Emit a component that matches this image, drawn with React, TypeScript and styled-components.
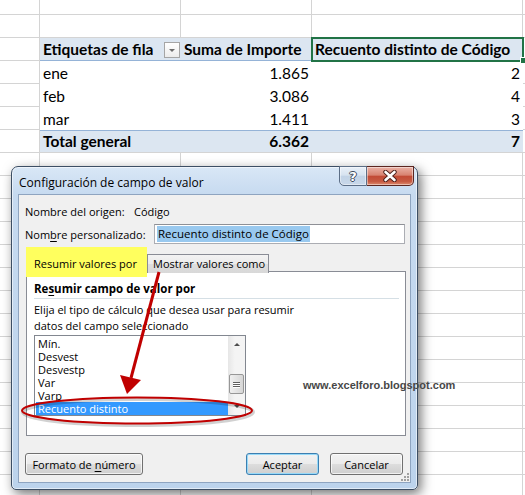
import React from 'react';
import styled, { createGlobalStyle, css } from 'styled-components';

const GlobalStyle = createGlobalStyle`
  html, body {
    margin: 0;
    padding: 0;
    background: #ffffff;
    overflow: hidden;
  }
`;

const Page = styled.div`
  position: relative;
  width: 525px;
  height: 495px;
  overflow: hidden;
  background: #ffffff;
`;

/* ---------- spreadsheet ---------- */

const Sheet = styled.div`
  width: 525px;
  font-family: Lato, "Liberation Sans", sans-serif;
  font-size: 15.5px;
  color: #000;
`;

const SheetRow = styled.div<{ $h?: number }>`
  display: grid;
  grid-template-columns: 40px 141px 131px 211px 1fr;
  height: ${p => p.$h ?? 23}px;
`;

type CellKind = 'grid' | 'head' | 'data' | 'total';

const Cell = styled.div<{ $kind?: CellKind; $right?: boolean; $selected?: boolean }>`
  position: relative;
  box-sizing: border-box;
  display: flex;
  align-items: flex-end;
  justify-content: ${p => (p.$right ? 'flex-end' : 'space-between')};
  padding: 0 3px 1px 3px;
  line-height: 19px;
  white-space: nowrap;
  ${p => {
    switch (p.$kind) {
      case 'head':
        return css`
          background: #dce6f1;
          border-bottom: 1px solid #95b3d7;
          font-weight: 700;
        `;
      case 'data':
        return css`
          background: #ffffff;
        `;
      case 'total':
        return css`
          background: #dce6f1;
          box-shadow: inset 0 1px 0 #95b3d7;
          border-bottom: 1px solid #d4d4d4;
          font-weight: 700;
        `;
      default:
        return css`
          border-right: 1px solid #d4d4d4;
          border-bottom: 1px solid #d4d4d4;
        `;
    }
  }}
  ${p =>
    p.$selected &&
    css`
      outline: 2px solid #217346;
      outline-offset: -1px;
      z-index: 2;
      &::after {
        content: '';
        position: absolute;
        right: -4px;
        bottom: -4px;
        width: 5px;
        height: 5px;
        background: #217346;
        border: 1px solid #fff;
      }
    `}
`;

const FilterButton = styled.span`
  box-sizing: border-box;
  width: 16px;
  height: 16px;
  margin: 0 -2px 1px 0;
  border: 1px solid #a5a5a5;
  background: linear-gradient(#ffffff, #ececec);
  display: flex;
  align-items: center;
  justify-content: center;
  &::before {
    content: '';
    border-left: 3px solid transparent;
    border-right: 3px solid transparent;
    border-top: 3px solid #6d6d6d;
  }
`;

/* ---------- dialog ---------- */

const Dialog = styled.div`
  position: absolute;
  left: 11px;
  top: 166px;
  width: 407px;
  height: 324px;
  box-sizing: border-box;
  border: 1px solid #3c4e64;
  border-radius: 7px 7px 5px 5px;
  background: linear-gradient(#d9e7f6, #c6daf0 28px, #bcd3ec);
  box-shadow: 3px 4px 12px rgba(0, 0, 0, 0.55), inset 0 0 0 1px rgba(255, 255, 255, 0.55);
  display: flex;
  flex-direction: column;
  padding: 0 6px 6px;
  font-family: "Open Sans", "Liberation Sans", sans-serif;
  font-size: 11px;
  color: #000;
  z-index: 3;
`;

const TitleBar = styled.div`
  height: 27px;
  display: flex;
  justify-content: space-between;
  align-items: flex-start;
`;

const TitleText = styled.div`
  padding: 8px 0 0 1px;
  line-height: 15px;
  font-size: 12px;
  color: #000;
`;

const CaptionButtons = styled.div`
  display: flex;
  margin: -1px -3px 0 0;
`;

const CaptionButton = styled.div<{ $close?: boolean }>`
  box-sizing: border-box;
  height: 20px;
  width: ${p => (p.$close ? 47 : 28)}px;
  display: flex;
  align-items: center;
  justify-content: center;
  border: 1px solid ${p => (p.$close ? '#5b2620' : '#5c6e86')};
  border-left-width: ${p => (p.$close ? 0 : 1)}px;
  border-radius: ${p => (p.$close ? '0 0 5px 0' : '0 0 0 5px')};
  background: ${p =>
    p.$close
      ? 'linear-gradient(#eab2a6, #d88371 45%, #c24b36 52%, #c65a42 80%, #dd8c6e)'
      : 'linear-gradient(#e9f0f8, #d7e3f0 45%, #c2d3e6 52%, #c8d8ea)'};
  box-shadow: inset 0 0 0 1px rgba(255, 255, 255, 0.45);
`;

const HelpGlyph = styled.span`
  font-family: "DejaVu Sans", sans-serif;
  font-weight: 700;
  font-size: 13px;
  line-height: 13px;
  color: #fff;
  text-shadow: -1px 0 #3e4b5c, 1px 0 #3e4b5c, 0 -1px #3e4b5c, 0 1px #3e4b5c;
`;

const ClientArea = styled.div`
  position: relative;
  flex: 1;
  border: 1px solid #8ea4c0;
  background: #f0f0f0;
  display: flex;
  flex-direction: column;
  padding: 8px 5px 7px 6px;
`;

const FieldRow = styled.div<{ $label: number; $h: number; $gap?: number }>`
  display: grid;
  grid-template-columns: ${p => p.$label}px 1fr;
  align-items: center;
  height: ${p => p.$h}px;
  margin-top: ${p => p.$gap ?? 0}px;
`;

const Accel = styled.span`
  text-decoration: underline;
  text-underline-offset: 2px;
`;

const TextBox = styled.div`
  box-sizing: border-box;
  height: 20px;
  border: 1px solid #abadb3;
  border-top-color: #8e9096;
  background: #fff;
  display: flex;
  align-items: center;
  padding-left: 2px;
  font-size: 11.5px;
`;

const SelectedText = styled.span`
  background: #99c9ef;
  padding: 0 1px;
  line-height: 16px;
`;

const Tabs = styled.div`
  margin: 3px -1px 0 1px;
  display: flex;
  flex-direction: column;
`;

const TabStrip = styled.div`
  position: relative;
  z-index: 1;
  height: 25px;
  display: flex;
  align-items: flex-start;
  margin-bottom: -1px;
`;

const Tab = styled.div<{ $active?: boolean }>`
  box-sizing: border-box;
  font-size: 11px;
  line-height: 16px;
  white-space: nowrap;
  ${p =>
    p.$active
      ? css`
          width: 121px;
          height: 30px;
          padding: 9px 0 0 8px;
          background: #ffff5e;
        `
      : css`
          width: 122px;
          height: 19px;
          margin-top: 7px;
          padding: 1px 0 0 5px;
          border: 1px solid #898c95;
          border-bottom: none;
          background: linear-gradient(#f3f3f3, #ebebeb 50%, #dedede 50%, #d8d8d8);
        `}
`;

const TabPanel = styled.div`
  box-sizing: border-box;
  height: 165px;
  border: 1px solid #898c95;
  background: #ffffff;
  padding: 10px 6px 0 7px;
  display: flex;
  flex-direction: column;
`;

const Heading = styled.div`
  font-weight: 700;
  font-size: 11.5px;
  line-height: 14px;
`;

const Separator = styled.div`
  height: 1px;
  margin-top: 2px;
  background: #d5dfe5;
`;

const Description = styled.p`
  margin: 3px 0 0;
  font-size: 11px;
  line-height: 16px;
`;

const ListBox = styled.div`
  box-sizing: border-box;
  margin-top: 1px;
  width: 212px;
  height: 81px;
  border: 1px solid #828790;
  display: flex;
  background: #fff;
`;

const ListItems = styled.div`
  flex: 1;
  padding: 1px 0 0 1px;
  display: flex;
  flex-direction: column;
`;

const ListItem = styled.div<{ $selected?: boolean }>`
  height: 13px;
  line-height: 13px;
  font-size: 11px;
  padding-left: 2px;
  white-space: nowrap;
  ${p =>
    p.$selected &&
    css`
      background: #3399ff;
      color: #fff;
    `}
`;

const ScrollBar = styled.div`
  width: 17px;
  display: flex;
  flex-direction: column;
  background: linear-gradient(90deg, #e6e6e6, #f4f4f4 40%, #f4f4f4);
`;

const ScrollArrow = styled.div<{ $down?: boolean }>`
  height: 17px;
  display: flex;
  align-items: center;
  justify-content: center;
  &::before {
    content: '';
    border-left: 3px solid transparent;
    border-right: 3px solid transparent;
    ${p =>
      p.$down
        ? css`
            border-top: 3px solid #4d4d4d;
          `
        : css`
            border-bottom: 3px solid #4d4d4d;
          `}
  }
`;

const ScrollTrack = styled.div`
  flex: 1;
  padding-top: 21px;
`;

const ScrollThumb = styled.div`
  box-sizing: border-box;
  margin: 0 1px;
  height: 20px;
  border: 1px solid #979797;
  border-radius: 2px;
  background: linear-gradient(90deg, #f0f0f0, #e3e3e3 50%, #d6d6d6);
  display: flex;
  flex-direction: column;
  justify-content: center;
  align-items: center;
  gap: 1px;
`;

const Grip = styled.span`
  width: 7px;
  height: 1px;
  background: #5e5e5e;
  box-shadow: 0 1px 0 #ffffff;
`;

const Footer = styled.div`
  margin-top: auto;
  margin-right: 2px;
  display: flex;
  align-items: center;
  gap: 11px;
`;

const Button = styled.div<{ $width: number; $default?: boolean }>`
  box-sizing: border-box;
  width: ${p => p.$width}px;
  height: 22px;
  border: 1px solid ${p => (p.$default ? '#3c7fb1' : '#707070')};
  border-radius: 3px;
  background: linear-gradient(#f2f2f2, #ebebeb 50%, #dddddd 50%, #cfcfcf);
  box-shadow: inset 0 0 0 1px ${p => (p.$default ? '#97d9f8' : 'rgba(255,255,255,0.7)')};
  display: flex;
  align-items: center;
  justify-content: center;
  font-size: 11px;
  white-space: nowrap;
  &:first-child {
    margin-right: auto;
  }
`;

const ResizeGrip = styled.svg`
  position: absolute;
  right: 1px;
  bottom: 1px;
`;

/* ---------- annotations ---------- */

const Annotations = styled.svg`
  position: absolute;
  left: 0;
  top: 0;
  pointer-events: none;
  z-index: 5;
`;

const Watermark = styled.span`
  position: absolute;
  left: 303px;
  top: 378px;
  z-index: 6;
  font-family: "Liberation Sans", Arial, sans-serif;
  font-weight: 700;
  font-size: 11px;
  line-height: 14px;
  color: #474747;
`;

const pivotRows = [
  { label: 'ene', sum: '1.865', count: '2' },
  { label: 'feb', sum: '3.086', count: '4' },
  { label: 'mar', sum: '1.411', count: '3' },
];

const listItems = ['Mín.', 'Desvest', 'Desvestp', 'Var', 'Varp', 'Recuento distinto'];

const EmptyRow: React.FC<{ h?: number }> = ({ h }) => (
  <SheetRow $h={h}>
    <Cell />
    <Cell />
    <Cell />
    <Cell />
    <Cell />
  </SheetRow>
);

const App: React.FC = () => {
  return (
    <Page>
      <GlobalStyle />
      <Sheet>
        <EmptyRow h={15} />
        <EmptyRow />
        <SheetRow>
          <Cell />
          <Cell $kind="head">
            Etiquetas de fila
            <FilterButton />
          </Cell>
          <Cell $kind="head">Suma de Importe</Cell>
          <Cell $kind="head" $selected>
            Recuento distinto de Código
          </Cell>
          <Cell />
        </SheetRow>
        {pivotRows.map(row => (
          <SheetRow key={row.label}>
            <Cell />
            <Cell $kind="data">{row.label}</Cell>
            <Cell $kind="data" $right>
              {row.sum}
            </Cell>
            <Cell $kind="data" $right>
              {row.count}
            </Cell>
            <Cell />
          </SheetRow>
        ))}
        <SheetRow>
          <Cell />
          <Cell $kind="total">Total general</Cell>
          <Cell $kind="total" $right>
            6.362
          </Cell>
          <Cell $kind="total" $right>
            7
          </Cell>
          <Cell />
        </SheetRow>
        {Array.from({ length: 15 }).map((_, i) => (
          <EmptyRow key={i} />
        ))}
      </Sheet>

      <Dialog>
        <TitleBar>
          <TitleText>Configuración de campo de valor</TitleText>
          <CaptionButtons>
            <CaptionButton>
              <HelpGlyph>?</HelpGlyph>
            </CaptionButton>
            <CaptionButton $close>
              <svg width="16" height="12" viewBox="0 0 16 12">
                <path
                  d="M3.5 2 L12.5 10 M12.5 2 L3.5 10"
                  stroke="#4a1f1a"
                  strokeWidth="4.4"
                  strokeLinecap="round"
                  fill="none"
                />
                <path
                  d="M3.5 2 L12.5 10 M12.5 2 L3.5 10"
                  stroke="#ffffff"
                  strokeWidth="2.6"
                  strokeLinecap="round"
                  fill="none"
                />
              </svg>
            </CaptionButton>
          </CaptionButtons>
        </TitleBar>

        <ClientArea>
          <FieldRow $label={109} $h={16}>
            <span>Nombre del origen:</span>
            <span>Código</span>
          </FieldRow>
          <FieldRow $label={129} $h={20} $gap={5}>
            <span>
              Nom<Accel>b</Accel>re personalizado:
            </span>
            <TextBox>
              <SelectedText>Recuento distinto de Código</SelectedText>
            </TextBox>
          </FieldRow>

          <Tabs>
            <TabStrip>
              <Tab $active>Resumir valores por</Tab>
              <Tab>Mostrar valores como</Tab>
            </TabStrip>
            <TabPanel>
              <Heading>
                Re<Accel>s</Accel>umir campo de valor por
              </Heading>
              <Separator />
              <Description>
                Elija el tipo de cálculo que desea usar para resumir
                <br />
                datos del campo seleccionado
              </Description>
              <ListBox>
                <ListItems>
                  {listItems.map((item, i) => (
                    <ListItem key={item} $selected={i === listItems.length - 1}>
                      {item}
                    </ListItem>
                  ))}
                </ListItems>
                <ScrollBar>
                  <ScrollArrow />
                  <ScrollTrack>
                    <ScrollThumb>
                      <Grip />
                      <Grip />
                      <Grip />
                    </ScrollThumb>
                  </ScrollTrack>
                  <ScrollArrow $down />
                </ScrollBar>
              </ListBox>
            </TabPanel>
          </Tabs>

          <Footer>
            <Button $width={118}>
              <span>
                Formato de <Accel>n</Accel>úmero
              </span>
            </Button>
            <Button $width={73} $default>
              Aceptar
            </Button>
            <Button $width={73}>Cancelar</Button>
          </Footer>

          <ResizeGrip width="8" height="8" viewBox="0 0 8 8">
            <g fill="#a0a0a0">
              <rect x="6" y="0" width="2" height="2" />
              <rect x="3" y="3" width="2" height="2" />
              <rect x="6" y="3" width="2" height="2" />
              <rect x="0" y="6" width="2" height="2" />
              <rect x="3" y="6" width="2" height="2" />
              <rect x="6" y="6" width="2" height="2" />
            </g>
          </ResizeGrip>
        </ClientArea>
      </Dialog>

      <Annotations width="525" height="495" viewBox="0 0 525 495">
        <ellipse cx="138" cy="412" rx="115" ry="13" fill="none" stroke="rgba(0,0,0,0.18)" strokeWidth="4" />
        <ellipse cx="137" cy="410.5" rx="115" ry="13" fill="none" stroke="#c00000" strokeWidth="2" />
        <line x1="159" y1="272" x2="131" y2="378" stroke="#c00000" strokeWidth="3" />
        <polygon points="120,375 141,380 127,394" fill="#c00000" />
      </Annotations>
      <Watermark>www.excelforo.blogspot.com</Watermark>
    </Page>
  );
};

export default App;
